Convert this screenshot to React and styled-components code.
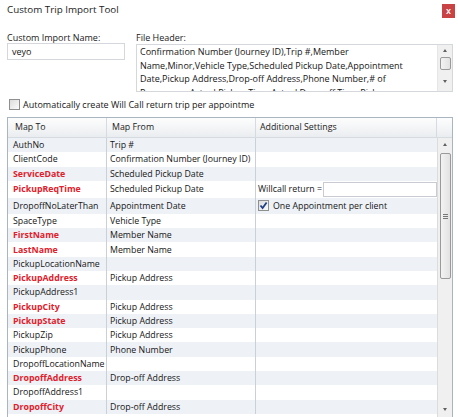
import React from "react";
import styled, { createGlobalStyle } from "styled-components";

const Global = createGlobalStyle`
  html, body { margin: 0; padding: 0; background: #fff; }
  body { font-family: "Open Sans", "Noto Sans", sans-serif; font-size: 9px; color: #161616; }
  * { box-sizing: border-box; }
`;

const Window = styled.div`
  width: 458px;
  height: 417px;
  overflow: hidden;
  background: #fff;
  display: flex;
  flex-direction: column;
`;

const TitleBar = styled.div`
  height: 22px;
  display: flex;
  align-items: flex-start;
  justify-content: space-between;
  padding: 3px 3px 0 7px;
`;

const Title = styled.div`
  font-size: 9.8px;
  line-height: 14px;
  color: #222;
`;

const Close = styled.div`
  width: 13px;
  height: 14px;
  margin-top: 1px;
  background: #c94344;
  color: #fff;
  font-size: 9px;
  line-height: 13px;
  text-align: center;
  font-weight: 600;
`;

const FormRow = styled.div`
  display: grid;
  grid-template-columns: 118px 317px;
  column-gap: 11px;
  padding: 10px 0 0 7px;
`;

const Field = styled.div`
  display: flex;
  flex-direction: column;
`;

const Label = styled.div`
  line-height: 11px;
  height: 11px;
  color: #222;
`;

const TextBox = styled.div`
  height: 17px;
  border: 1px solid #d4d7dc;
  padding: 0 4px;
  line-height: 15px;
  background: #fff;
`;

const TextArea = styled.div`
  height: 48px;
  margin-top: 1px;
  border: 1px solid #d4d7dc;
  display: flex;
  overflow: hidden;
`;

const TextAreaText = styled.div`
  flex: 1;
  padding: 0 0 0 3px;
  line-height: 13.5px;
  white-space: nowrap;
  overflow: hidden;
`;

const ScrollBar = styled.div`
  width: 15px;
  flex: none;
  background: #f0f0f0;
  border-left: 1px solid #e6e6e6;
  display: flex;
  flex-direction: column;
  align-items: center;
`;

const Arrow = styled.div`
  width: 0;
  height: 0;
  border-left: 2.5px solid transparent;
  border-right: 2.5px solid transparent;
  ${(p) => (p.$down ? "border-top: 3px solid #606060;" : "border-bottom: 3px solid #606060;")}
  margin: ${(p) => p.$m};
`;

const Thumb = styled.div`
  width: 11px;
  height: ${(p) => p.$h}px;
  margin-top: ${(p) => p.$mt}px;
  border: 1px solid #9a9a9a;
  border-radius: 2px;
  background: linear-gradient(to right, #f3f3f3, #e2e2e2);
  display: flex;
  flex-direction: column;
  align-items: center;
  justify-content: center;
  gap: 1px;
`;

const Grip = styled.div`
  width: 5px;
  height: 1px;
  background: #777;
`;

const Spacer = styled.div`
  flex: 1;
`;

const CheckRow = styled.div`
  display: flex;
  align-items: center;
  gap: 3px;
  padding: 6px 0 0 9px;
  height: 19px;
  font-size: 9px;
`;

const Box = styled.span`
  width: 11px;
  height: 11px;
  flex: none;
  border: 1px solid #8e8f8f;
  background: linear-gradient(135deg, #dcdcdc, #fbfbfb);
  display: inline-flex;
  align-items: center;
  justify-content: center;
`;

const Grid = styled.div`
  margin: 6px 0 0 7px;
  width: 446px;
  border: 1px solid #a9b5c1;
  border-bottom: none;
  flex: 1;
  display: flex;
  flex-direction: column;
  font-size: 8.8px;
`;

const Header = styled.div`
  display: grid;
  grid-template-columns: 99px 149px 181px 15px;
  height: 20px;
  background: linear-gradient(#fdfdfd, #eaedf0);
  border-bottom: 1px solid #d5dbe1;
`;

const HeaderCell = styled.div`
  padding-left: ${(p) => p.$pl || 7}px;
  line-height: 19px;
  border-right: ${(p) => (p.$last ? "none" : "1px solid #d5dbe1")};
  color: #222;
`;

const Body = styled.div`
  flex: 1;
  display: flex;
`;

const Rows = styled.div`
  flex: 1;
`;

const Row = styled.div`
  display: grid;
  grid-template-columns: 99px 149px 181px;
  height: ${(p) => p.$h}px;
  background: ${(p) => (p.$alt ? "#eef1f6" : "#fff")};
`;

const Cell = styled.div`
  padding-left: ${(p) => p.$pl}px;
  border-right: ${(p) => (p.$last ? "none" : "1px solid #c9d0d8")};
  display: flex;
  align-items: center;
  white-space: nowrap;
  overflow: hidden;
  color: ${(p) => (p.$req ? "#e1202b" : "#161616")};
  font-weight: ${(p) => (p.$req ? 700 : 400)};
`;

const SettingLabel = styled.span`
  margin-right: 1px;
`;

const InlineBox = styled.div`
  flex: 1;
  height: 15px;
  border: 1px solid #c8ccd2;
  background: #fff;
`;

const SettingCheck = styled.label`
  display: flex;
  align-items: center;
  gap: 4px;
`;

const GridScroll = styled(ScrollBar)`
  border-left: 1px solid #dcdcdc;
`;

const headerLines = [
  "Confirmation Number (Journey ID),Trip #,Member",
  "Name,Minor,Vehicle Type,Scheduled Pickup Date,Appointment",
  "Date,Pickup Address,Drop-off Address,Phone Number,# of",
  "Passengers,Actual Pickup Time,Actual Drop-off Time,Pickup",
];

const rows = [
  ["AuthNo", "Trip #", false],
  ["ClientCode", "Confirmation Number (Journey ID)", false],
  ["ServiceDate", "Scheduled Pickup Date", true],
  ["PickupReqTime", "Scheduled Pickup Date", true, "willcall"],
  ["DropoffNoLaterThan", "Appointment Date", false, "oneappt"],
  ["SpaceType", "Vehicle Type", false],
  ["FirstName", "Member Name", true],
  ["LastName", "Member Name", true],
  ["PickupLocationName", "", false],
  ["PickupAddress", "Pickup Address", true],
  ["PickupAddress1", "", false],
  ["PickupCity", "Pickup Address", true],
  ["PickupState", "Pickup Address", true],
  ["PickupZip", "Pickup Address", false],
  ["PickupPhone", "Phone Number", false],
  ["DropoffLocationName", "", false],
  ["DropoffAddress", "Drop-off Address", true],
  ["DropoffAddress1", "", false],
  ["DropoffCity", "Drop-off Address", true],
];

const heights = (i) => (i === 3 ? 17 : i === 4 ? 16 : 14.29);

const Check = () => (
  <svg width="9" height="9" viewBox="0 0 9 9">
    <path d="M1.5 4.5 L3.6 7 L7.6 1.5" fill="none" stroke="#1c3f8a" strokeWidth="1.8" />
  </svg>
);

export default function App() {
  return (
    <>
      <Global />
      <Window>
        <TitleBar>
          <Title>Custom Trip Import Tool</Title>
          <Close>x</Close>
        </TitleBar>
        <FormRow>
          <Field>
            <Label>Custom Import Name:</Label>
            <TextBox>veyo</TextBox>
          </Field>
          <Field>
            <Label>File Header:</Label>
            <TextArea>
              <TextAreaText>
                {headerLines.map((l) => (
                  <div key={l}>{l}</div>
                ))}
              </TextAreaText>
              <ScrollBar>
                <Arrow $m="4px 0 0 0" />
                <Thumb $h={13} $mt={5} />
                <Spacer />
                <Arrow $down $m="0 0 8px 0" />
              </ScrollBar>
            </TextArea>
          </Field>
        </FormRow>
        <CheckRow>
          <Box />
          <span>Automatically create Will Call return trip per appointme</span>
        </CheckRow>
        <Grid>
          <Header>
            <HeaderCell>Map To</HeaderCell>
            <HeaderCell $pl={5}>Map From</HeaderCell>
            <HeaderCell $pl={4}>Additional Settings</HeaderCell>
            <HeaderCell $last />
          </Header>
          <Body>
            <Rows>
              {rows.map(([to, from, req, extra], i) => (
                <Row key={to} $h={heights(i)} $alt={i % 2 === 0}>
                  <Cell $pl={5} $req={req}>{to}</Cell>
                  <Cell $pl={3}>{from}</Cell>
                  <Cell $pl={2} $last>
                    {extra === "willcall" && (
                      <>
                        <SettingLabel>Willcall return =</SettingLabel>
                        <InlineBox />
                      </>
                    )}
                    {extra === "oneappt" && (
                      <SettingCheck>
                        <Box>
                          <Check />
                        </Box>
                        One Appointment per client
                      </SettingCheck>
                    )}
                  </Cell>
                </Row>
              ))}
            </Rows>
            <GridScroll>
              <Arrow $m="5px 0 0 0" />
              <Thumb $h={126} $mt={7}>
                <Grip />
                <Grip />
                <Grip />
              </Thumb>
              <Spacer />
              <Arrow $down $m="0 0 6px 0" />
            </GridScroll>
          </Body>
        </Grid>
      </Window>
    </>
  );
}
